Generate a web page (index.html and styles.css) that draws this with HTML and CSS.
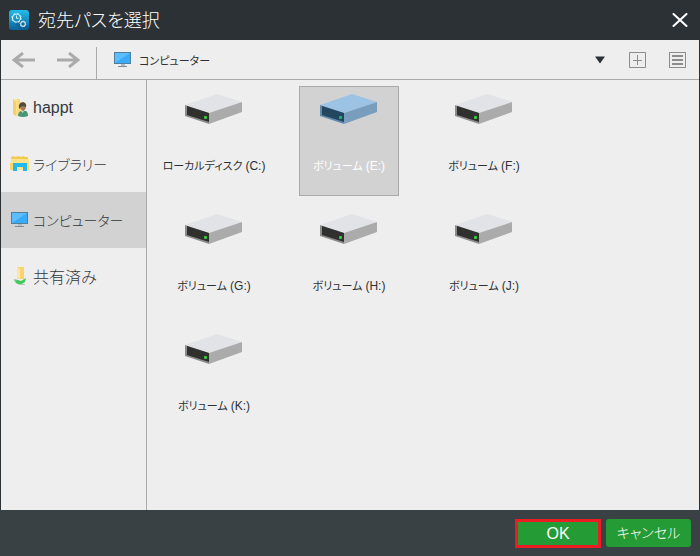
FILE: index.html
```html
<!DOCTYPE html>
<html lang="ja">
<head>
    <meta charset="UTF-8">
    <meta name="viewport" content="width=device-width, initial-scale=1.0">
    <title>宛先パスを選択</title>
    <link rel="stylesheet" href="styles.css">
</head>
<body>
    <!-- Shared icons -->
    <svg class="defs" width="0" height="0" aria-hidden="true">
        <defs>
            <linearGradient id="screen" x1="0" y1="0" x2="1" y2="1">
                <stop offset="0.5" stop-color="#5bbcff"/>
                <stop offset="0.5" stop-color="#3aabf8"/>
            </linearGradient>
            <linearGradient id="appBg" x1="0" y1="0" x2="0" y2="1">
                <stop offset="0" stop-color="#23bde9"/>
                <stop offset="1" stop-color="#0c639c"/>
            </linearGradient>
            <linearGradient id="folder" x1="0" y1="0" x2="1" y2="0">
                <stop offset="0" stop-color="#ffe9a2"/>
                <stop offset="1" stop-color="#f8d166"/>
            </linearGradient>
        </defs>
        <symbol id="drive" viewBox="0 0 58 32">
            <path class="drive-top" d="M0 12 L32 1 L57 9 L24 20z"/>
            <path class="drive-side" d="M24 20 L57 9 V19 L24 31z"/>
            <path class="drive-edge" d="M0 12 L24 20 V31 L0 23z"/>
            <path class="drive-front" d="M2 13 L24 20 V29 L2 22z"/>
            <rect class="drive-led" x="19" y="23" width="3" height="3" rx="1"/>
        </symbol>
        <symbol id="monitor" viewBox="0 0 18 16">
            <rect x="0.5" y="0.5" width="16" height="11" fill="url(#screen)" stroke="#4f7f9f"/>
            <path d="M7 12h4v2H7z" fill="#b4bcc2"/>
            <path d="M4 14.5h9" stroke="#7d8d98"/>
        </symbol>
    </svg>

    <header class="titlebar">
        <svg class="app-icon" width="20" height="20" viewBox="0 0 20 20" aria-hidden="true">
            <rect width="20" height="20" rx="3" fill="url(#appBg)"/>
            <path d="M11 10 L17 13 L20 17 V18 Q20 20 18 20 H12 L4 12z" fill="#09558a" opacity="0.5"/>
            <circle cx="7.5" cy="8" r="4" fill="none" stroke="#d2f1fb" stroke-width="1.2"/>
            <circle cx="7.5" cy="8" r="4.800" fill="none" stroke="#d2f1fb" stroke-width="0.8" stroke-dasharray="1.6 2.2"/>
            <path d="M7.5 5.5V8.3H9.5" fill="none" stroke="#d2f1fb"/>
            <circle cx="14" cy="14" r="2.3" fill="none" stroke="#c4e4f3" stroke-width="1.2"/>
            <circle cx="14" cy="14" r="3" fill="none" stroke="#c4e4f3" stroke-width="0.6" stroke-dasharray="1 1.3"/>
        </svg>
        <h1 class="title">宛先パスを選択</h1>
        <button type="button" class="icon-btn" aria-label="閉じる">
            <svg width="16" height="14" viewBox="0 0 16 14"><path d="M1.5 1L14.5 13M14.5 1L1.5 13" stroke="#fff" stroke-width="2" stroke-linecap="round"/></svg>
        </button>
    </header>

    <div class="toolbar">
        <div class="nav">
            <button type="button" class="icon-btn" aria-label="戻る">
                <svg width="24" height="16" viewBox="0 0 24 16"><path d="M23 8H2M11 1L2 8L11 15" fill="none" stroke="#aaa" stroke-width="3"/></svg>
            </button>
            <button type="button" class="icon-btn" aria-label="進む">
                <svg width="24" height="16" viewBox="0 0 24 16"><path d="M1 8H22M13 1L22 8L13 15" fill="none" stroke="#aaa" stroke-width="3"/></svg>
            </button>
        </div>
        <div class="path">
            <svg width="18" height="16" aria-hidden="true"><use href="#monitor"/></svg>
            <span class="path-text">コンピューター</span>
            <button type="button" class="icon-btn" aria-label="パスの一覧">
                <svg width="10" height="8" viewBox="0 0 10 8"><path d="M0 0.5H10L5 7.5z" fill="#2b3135"/></svg>
            </button>
        </div>
        <div class="tools">
            <button type="button" class="icon-btn" aria-label="新しいフォルダー">
                <svg width="17" height="16" viewBox="0 0 17 16"><path d="M0.5 0.5h16v15h-16zM8.5 3v10M4 8.5h9" fill="none" stroke="#8c8c8c"/></svg>
            </button>
            <button type="button" class="icon-btn" aria-label="表示の切り替え">
                <svg width="17" height="16" viewBox="0 0 17 16">
                    <rect x="0.5" y="0.5" width="16" height="15" fill="none" stroke="#8c8c8c"/>
                    <path d="M3 4h11M3 8h11M3 12h11" stroke="#8c8c8c" stroke-width="2"/>
                </svg>
            </button>
        </div>
    </div>

    <main class="main">
        <nav class="sidebar">
            <a class="place" href="#home">
                <svg width="20" height="20" viewBox="0 0 20 20" aria-hidden="true">
                    <path d="M4 1H11V4H12V17L7 18L4 16z" fill="url(#folder)"/>
                    <path d="M4 1L7 4V18L4 16z" fill="#f3cf72"/>
                    <path d="M9 18Q9 14 12 13L17 13Q19 14 19 18Q14 20 9 18z" fill="#4a9575"/>
                    <path d="M12 13L14 15L15 12z" fill="#d9e6df"/>
                    <path d="M11 8Q11 5 14 5Q17 6 17 9Q16 13 14 13Q12 13 11 8z" fill="#a27a5c"/>
                    <path d="M10 10Q9 5 14 4Q18 5 17 9Q15 8 13 8Q11 9 11 11z" fill="#54493f"/>
                </svg>
                happt
            </a>
            <a class="place" href="#library">
                <svg width="20" height="20" viewBox="0 0 20 20" aria-hidden="true">
                    <path d="M2 3L5 2L6 3L10 2L11 3L15 2L16 3H19V8H2z" fill="#f3ca50"/>
                    <path d="M2 5H20V16H2z" fill="#ffe38a"/>
                    <path d="M1 9H20V16H1z" fill="#fbd768"/>
                    <path d="M4 9H18V17H14V13H8V17H4z" fill="#23b8ee"/>
                    <path d="M8 13H14V16H8z" fill="#ffe48d"/>
                </svg>
                <span class="kana">ライブラリー</span>
            </a>
            <a class="place place-active" href="#computer" aria-current="page">
                <svg width="20" height="16" viewBox="0 0 20 16" aria-hidden="true"><use href="#monitor" x="2" width="18" height="16"/></svg>
                <span class="kana">コンピューター</span>
            </a>
            <a class="place" href="#shared">
                <svg width="20" height="20" viewBox="0 0 20 20" aria-hidden="true">
                    <path d="M8 1H15V13H8z" fill="#f8d36e"/>
                    <path d="M8 1L11 3V13L8 12z" fill="#ffe6a0"/>
                    <path d="M5 14L9 14L12 15L17 12L16 16L11 19L7 17z" fill="#41c95a"/>
                    <path d="M4 13L8 13L7 15zM10 18h6v1h-6z" fill="#b9c5bc"/>
                </svg>
                共有済み
            </a>
        </nav>

        <div class="drives">
            <button type="button" class="drive">
                <svg width="58" height="32" aria-hidden="true"><use href="#drive"/></svg>
                <span>ローカルディスク <span class="letter">(C:)</span></span>
            </button>
            <button type="button" class="drive drive-selected" aria-pressed="true">
                <svg width="58" height="32" aria-hidden="true"><use href="#drive"/></svg>
                <span>ボリューム <span class="letter">(E:)</span></span>
            </button>
            <button type="button" class="drive">
                <svg width="58" height="32" aria-hidden="true"><use href="#drive"/></svg>
                <span>ボリューム <span class="letter">(F:)</span></span>
            </button>
            <button type="button" class="drive">
                <svg width="58" height="32" aria-hidden="true"><use href="#drive"/></svg>
                <span>ボリューム <span class="letter">(G:)</span></span>
            </button>
            <button type="button" class="drive">
                <svg width="58" height="32" aria-hidden="true"><use href="#drive"/></svg>
                <span>ボリューム <span class="letter">(H:)</span></span>
            </button>
            <button type="button" class="drive">
                <svg width="58" height="32" aria-hidden="true"><use href="#drive"/></svg>
                <span>ボリューム <span class="letter">(J:)</span></span>
            </button>
            <button type="button" class="drive">
                <svg width="58" height="32" aria-hidden="true"><use href="#drive"/></svg>
                <span>ボリューム <span class="letter">(K:)</span></span>
            </button>
        </div>
    </main>

    <footer class="footer">
        <button type="button" class="btn btn-ok">OK</button>
        <button type="button" class="btn"><span class="kana">キャンセル</span></button>
    </footer>
</body>
</html>
```
FILE: styles.css
```css
* {
    box-sizing: border-box;
}
body {
    display: flex;
    flex-direction: column;
    min-height: 100vh;
    margin: 0;
    background: #2b3135;
    color: #2b3135;
    font-family: "Liberation Sans", "Noto Sans CJK JP", sans-serif;
    font-feature-settings: "palt";
    font-weight: 300;
}
button {
    font: inherit;
    font-feature-settings: inherit;
    color: inherit;
    cursor: pointer;
}
svg {
    display: block;
    flex: none;
}
.defs {
    position: absolute;
}
.icon-btn {
    padding: 0;
    background: none;
    border: none;
}
.kana {
    font-size: 14px;
}

/* Title bar */
.titlebar {
    display: flex;
    align-items: center;
    gap: 9px;
    height: 40px;
    padding: 0 12px 0 9px;
    color: #fff;
}
.title {
    flex: 1;
    margin: 0;
    padding-top: 2px;
    font-size: 18px;
    font-weight: 300;
    line-height: 24px;
}

/* Toolbar */
.toolbar {
    display: flex;
    align-items: center;
    height: 40px;
    margin: 0 1px;
    padding-right: 13px;
    background: #eee;
    border-bottom: 1px solid #aaa;
}
.nav {
    display: flex;
    gap: 20px;
    padding: 0 16px 0 11px;
}
.path {
    display: flex;
    flex: 1;
    align-items: center;
    align-self: stretch;
    gap: 7px;
    margin-top: 7px;
    padding: 0 24px 7px 17px;
    border-left: 1px solid #aaa;
}
.path-text {
    flex: 1;
    font-size: 11px;
    font-weight: 400;
}
.tools {
    display: flex;
    gap: 23px;
}

/* Places and drives */
.main {
    display: flex;
    flex: 1;
    margin: 0 1px;
    background: #eee;
}
.sidebar {
    width: 146px;
    border-right: 1px solid #aaa;
}
.place {
    display: flex;
    align-items: center;
    gap: 4px;
    height: 56px;
    padding-left: 8px;
    color: #34393c;
    font-size: 16px;
    text-decoration: none;
}
.place-active {
    background: #d2d2d2;
}
.drives {
    display: grid;
    flex: 1;
    grid-template-columns: repeat(auto-fill, 100px);
    align-content: start;
    gap: 10px 35px;
    padding: 6px 40px 6px 17px;
}
.drive {
    display: flex;
    flex-direction: column;
    align-items: center;
    gap: 32px;
    height: 110px;
    padding: 6px 0;
    background: none;
    border: 1px solid transparent;
    font-size: 11px;
    font-weight: 400;
    line-height: 18px;
    white-space: nowrap;
}
.letter {
    font-size: 12px;
}
.drive-selected {
    background: #d2d2d2;
    border-color: #aaa;
    color: #fff;
}
.drive-top { fill: var(--top, #e2e3e7); }
.drive-side { fill: var(--side, #ababab); }
.drive-edge { fill: var(--edge, #8c8c8c); }
.drive-front { fill: var(--front, #30312f); }
.drive-led { fill: var(--led, #2fd03c); }
.drive-selected {
    --top: #9dc3e4;
    --side: #789dbd;
    --edge: #6289a9;
    --front: #234761;
    --led: #24b46c;
}

/* Footer */
.footer {
    display: flex;
    align-items: center;
    justify-content: flex-end;
    gap: 5px;
    height: 46px;
    padding: 0 9px;
    background: #394144;
}
.btn {
    width: 85px;
    height: 28px;
    padding: 0;
    background: #259b36;
    border: none;
    border-radius: 3px;
    color: #fff;
    font-size: 16px;
    line-height: 24px;
}
.btn-ok {
    width: 86px;
    height: 29px;
    border: 3px solid #ed1c24;
    border-radius: 0;
}
```
